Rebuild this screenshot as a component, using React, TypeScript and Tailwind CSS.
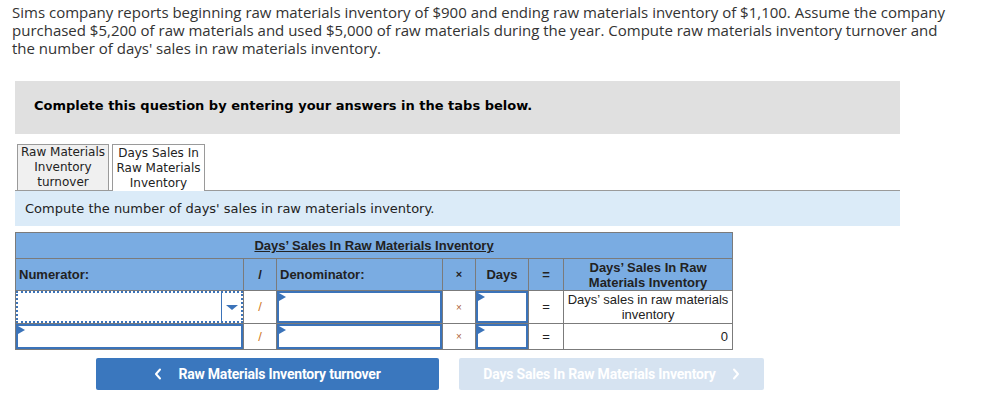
import React from 'react';

const Flag = () => (
    <span className="absolute left-0 top-0 w-0 h-0 border-t-[4px] border-b-[4px] border-l-[7px] border-t-transparent border-b-transparent border-l-[#3b73b9]" />
);

const InputCell = ({ flag = true }: { flag?: boolean }) => (
    <div className="relative h-full border-2 border-[#3b73b9] bg-white">
        {flag && <Flag />}
    </div>
);

const Chevron = ({ dir }: { dir: 'left' | 'right' }) => (
    <svg width="8" height="12" viewBox="0 0 8 12" fill="none">
        <path
            d={dir === 'left' ? 'M6 1.5 L2 6 L6 10.5' : 'M2 1.5 L6 6 L2 10.5'}
            stroke="currentColor"
            strokeWidth="2"
            strokeLinecap="round"
            strokeLinejoin="round"
        />
    </svg>
);

export default function App() {
    const cell = 'border border-[#7b7b7b]';
    return (
        <div className="w-[997px] h-[403px] bg-white overflow-hidden">
            <p className="pl-[12px] pt-[3px] w-[955px] text-[15px] leading-[18px] text-[#333] font-['Open_Sans',sans-serif]">
                Sims company reports beginning raw materials inventory of $900 and ending raw materials inventory of $1,100. Assume the company purchased $5,200 of raw materials and used $5,000 of raw materials during the year. Compute raw materials inventory turnover and the number of days' sales in raw materials inventory.
            </p>

            <div className="ml-[15px] mt-[24px] w-[885px] h-[53px] bg-[#e0e0e0] flex items-center pl-[19px] pb-[4px] font-['DejaVu_Sans',sans-serif] text-[13px] font-bold text-black">
                Complete this question by entering your answers in the tabs below.
            </div>

            <div className="ml-[15px] mt-[9px] w-[885px] font-['DejaVu_Sans',sans-serif] text-[12px] leading-[15px] text-[#222]">
                <div className="flex items-end gap-[3px] pl-[2px]">
                    <div className="w-[92px] h-[46px] bg-[#f0f0f0] border border-b-0 border-[#9a9a9a] flex flex-col items-center justify-center text-center">
                        <span>Raw Materials</span>
                        <span>Inventory</span>
                        <span>turnover</span>
                    </div>
                    <div className="w-[93px] h-[47px] bg-white border border-b-0 border-[#9a9a9a] flex flex-col items-center justify-center text-center relative top-[1px]">
                        <span>Days Sales In</span>
                        <span>Raw Materials</span>
                        <span>Inventory</span>
                    </div>
                </div>
                <div className="border-t border-[#9a9a9a] bg-[#dbebf8] h-[36px] flex items-center pl-[10px] text-[13px] text-[#222]">
                    Compute the number of days' sales in raw materials inventory.
                </div>
            </div>

            <table className="ml-[15px] mt-[6px] border-collapse w-[717px] font-['Liberation_Sans',Arial,sans-serif] text-[13px] text-[#222] table-fixed">
                <colgroup>
                    <col className="w-[228px]" />
                    <col className="w-[33px]" />
                    <col className="w-[166px]" />
                    <col className="w-[33px]" />
                    <col className="w-[53px]" />
                    <col className="w-[35px]" />
                    <col className="w-[169px]" />
                </colgroup>
                <tbody>
                    <tr className="h-[26px] bg-[#7aace2]">
                        <td colSpan={7} className={`${cell} text-center font-bold underline pt-[1px]`}>
                            Days’ Sales In Raw Materials Inventory
                        </td>
                    </tr>
                    <tr className="h-[32px] bg-[#7aace2] font-bold">
                        <td className={`${cell} pl-[3px]`}>Numerator:</td>
                        <td className={`${cell} text-center`}>/</td>
                        <td className={`${cell} pl-[3px]`}>Denominator:</td>
                        <td className={`${cell} text-center text-[11px]`}>×</td>
                        <td className={`${cell} text-center`}>Days</td>
                        <td className={`${cell} text-center`}>=</td>
                        <td className={`${cell} text-center leading-[15px]`}>Days’ Sales In Raw<br />Materials Inventory</td>
                    </tr>
                    <tr className="h-[33px] bg-white">
                        <td className={`${cell} p-0`}>
                            <div className="h-[32px] border-2 border-dotted border-[#3b73b9] flex">
                                <div className="flex-1" />
                                <div className="w-[20px] border-l border-[#3b73b9] flex items-center justify-center">
                                    <span className="w-0 h-0 border-l-[6px] border-r-[6px] border-t-[5px] border-l-transparent border-r-transparent border-t-[#3b73b9]" />
                                </div>
                            </div>
                        </td>
                        <td className={`${cell} text-center text-[#d07a1e]`}>/</td>
                        <td className={`${cell} p-0 h-[33px]`}><InputCell /></td>
                        <td className={`${cell} text-center text-[10px] text-[#b0643a]`}>×</td>
                        <td className={`${cell} p-0 h-[33px]`}><InputCell /></td>
                        <td className={`${cell} text-center`}>=</td>
                        <td className={`${cell} text-center leading-[15px]`}>Days’ sales in raw materials<br />inventory</td>
                    </tr>
                    <tr className="h-[26px] bg-white">
                        <td className={`${cell} p-0 h-[26px]`}><InputCell /></td>
                        <td className={`${cell} text-center text-[#d07a1e]`}>/</td>
                        <td className={`${cell} p-0 h-[26px]`}><InputCell /></td>
                        <td className={`${cell} text-center text-[10px] text-[#b0643a]`}>×</td>
                        <td className={`${cell} p-0 h-[26px]`}><InputCell /></td>
                        <td className={`${cell} text-center`}>=</td>
                        <td className={`${cell} text-right pr-[4px]`}>0</td>
                    </tr>
                </tbody>
            </table>

            <div className="flex gap-[20px] ml-[96px] mt-[8px] font-['Roboto',sans-serif] text-[14px] font-bold tracking-[-0.2px]">
                <button className="w-[343px] h-[32px] bg-[#3a77be] text-white rounded-[2px] flex items-center justify-center gap-[16px]">
                    <Chevron dir="left" />
                    <span>Raw Materials Inventory turnover</span>
                </button>
                <button className="w-[305px] h-[32px] bg-[#d6e3f1] text-white rounded-[2px] flex items-center justify-center gap-[16px]">
                    <span>Days Sales In Raw Materials Inventory</span>
                    <Chevron dir="right" />
                </button>
            </div>
        </div>
    );
}
